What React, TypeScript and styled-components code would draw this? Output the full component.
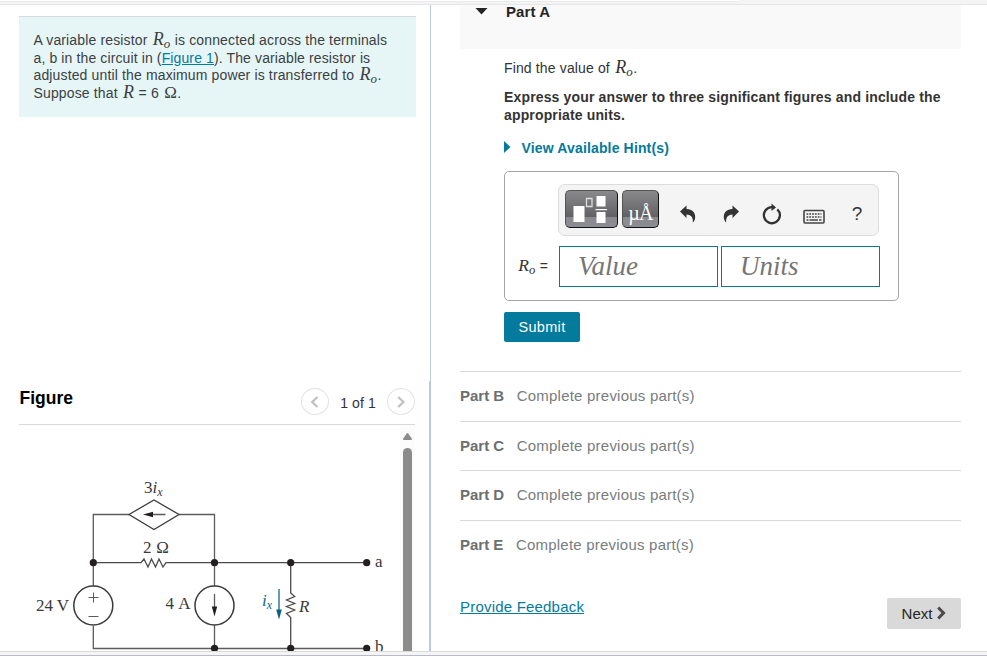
import React from "react";
import styled, { createGlobalStyle } from "styled-components";

const GlobalStyle = createGlobalStyle`
  * { box-sizing: border-box; }
  body {
    margin: 0;
    background: #fff;
    color: #333;
    font-family: "Liberation Sans", Arial, sans-serif;
    font-size: 14px;
    overflow: hidden;
  }
  button { font-family: inherit; margin: 0; }
`;

const Page = styled.div`
  display: flex;
  flex-direction: column;
  width: 987px;
  height: 656px;
`;

const TopEdge = styled.div`
  flex: none;
  height: 5px;
  background: #f4f4f4;
  border-bottom: 1px solid #e6e6e6;
`;

const TopEdgeTab = styled.div`
  width: 740px;
  height: 2px;
  background: #fff;
  border-bottom: 1px solid #ebebeb;
  border-bottom-right-radius: 4px;
`;

const BottomEdge = styled.div`
  flex: none;
  height: 5px;
  background: #f5f5f5;
  border-top: 1px solid #dadada;
  border-bottom: 1px solid #b9b9c9;
`;

const Columns = styled.main`
  display: flex;
  height: 646px;
`;

const LeftColumn = styled.section`
  flex: none;
  width: 431px;
`;

const ProblemPane = styled.div`
  height: 376px;
  padding: 11px 14px 0 19px;
  border-right: 1px solid #b9cbdd;
`;

const ProblemBox = styled.div`
  height: 101px;
  padding: 15px 0 0 14.5px;
  border-top: 1px solid #d5dcdc;
  background: #e6f6f7;
  color: #3c4043;
`;

const TextLine = styled.div<{ $spacing?: number; $height?: number }>`
  height: ${(p) => p.$height ?? 17.7}px;
  line-height: ${(p) => p.$height ?? 17.7}px;
  letter-spacing: ${(p) => p.$spacing ?? 0.14}px;
  white-space: nowrap;
`;

const MathText = styled.i<{ $upright?: boolean; $size?: number }>`
  padding: 0 0.5px 0 1.3px;
  font-family: "Liberation Serif", "Times New Roman", serif;
  font-style: ${(p) => (p.$upright ? "normal" : "italic")};
  font-size: ${(p) => p.$size ?? 18}px;
  line-height: 0;
  letter-spacing: 0;

  sub {
    font-size: 0.72em;
    line-height: 0;
    vertical-align: -3px;
  }
`;

const Link = styled.a<{ $size?: number; $spacing?: number }>`
  color: #047a9c;
  font-size: ${(p) => p.$size ?? 14}px;
  letter-spacing: ${(p) => p.$spacing ?? 0.12}px;
  text-decoration: underline;
`;

const FigurePane = styled.div`
  height: 270px;
  padding: 0 14px 0 19px;
  border-right: 2px solid #b9cbdd;
  width: 431px;
`;

const FigureHeader = styled.header`
  display: flex;
  align-items: center;
  width: 396px;
  height: 44px;
  border-bottom: 1px solid #dadada;
`;

const FigureTitle = styled.h2`
  flex: 1;
  margin: 0;
  padding: 0 0 9px 0.5px;
  color: #000;
  font-size: 17.5px;
  line-height: 22px;
`;

const PagerButton = styled.button`
  display: grid;
  place-items: center;
  width: 28px;
  height: 27px;
  margin-bottom: 2px;
  padding: 0;
  border: 1px solid #e2e2e2;
  border-radius: 50%;
  background: #fff;
`;

const PagerLabel = styled.span`
  width: 58px;
  text-align: center;
  font-size: 14px;
  letter-spacing: 0.1px;
`;

const FigureViewport = styled.div`
  display: flex;
  width: 396px;
  height: 226px;
  overflow: hidden;
`;

const Circuit = styled.svg`
  display: block;
  flex: none;
  width: 381px;
  height: 226px;
  font-family: "Liberation Serif", "Times New Roman", serif;
`;

const Scrollbar = styled.div`
  display: flex;
  flex-direction: column;
  align-items: center;
  width: 15px;
  padding-top: 8px;
  background: #fbfbfb;
`;

const ScrollThumb = styled.div`
  flex: 1;
  width: 9px;
  margin-top: 8px;
  border-radius: 5px 5px 0 0;
  background: #8b8b8b;
`;

const RightColumn = styled.section`
  flex: none;
  width: 501px;
  margin-left: 29px;
`;

const PartHeader = styled.header`
  display: flex;
  align-items: flex-start;
  height: 44px;
  padding-left: 15px;
  background: #f9f9f9;

  svg { margin-top: 3px; }
`;

const PartTitle = styled.h3`
  margin: -2px 0 0 18px;
  color: #252525;
  font-size: 15px;
  letter-spacing: 0.1px;
  line-height: 18px;
`;

const PartBody = styled.div`
  height: 322px;
  padding: 11px 0 0 44px;
`;

const Instruction = styled.div`
  margin-top: 10.3px;
  color: #333;
  font-weight: bold;
`;

const HintToggle = styled.div`
  display: flex;
  align-items: center;
  margin-top: 15px;
  color: #047a9c;
  font-weight: bold;
  gap: 10.5px;

  svg { margin-bottom: 2px; }
`;

const AnswerBox = styled.div`
  width: 395px;
  height: 130px;
  margin-top: 14px;
  padding: 12px 18px 0 13px;
  border: 1px solid #a6a6a6;
  border-radius: 5px;
`;

const Toolbar = styled.div`
  display: flex;
  align-items: flex-start;
  width: 321px;
  height: 52px;
  margin-left: 40px;
  padding: 5px 0 0 6px;
  border: 1px solid #dcdcdc;
  border-radius: 7px;
  background: #f4f4f4;
`;

const TemplateButton = styled.button<{ $width: number }>`
  width: ${(p) => p.$width}px;
  height: 38px;
  margin-right: 4px;
  padding: 0;
  border: 1px solid #111;
  border-top-color: #555;
  border-left-color: #555;
  border-radius: 5px;
  background: linear-gradient(#89898b, #626264 71%, #89898f 72%, #8c8c94);
  color: #fff;
  font: 20px "Liberation Serif", serif;

  svg { display: block; }
`;

const SymbolText = styled.span`
  display: block;
  padding-top: 8px;
  line-height: 24px;
  letter-spacing: -0.8px;
`;

const ToolIcons = styled.div`
  display: grid;
  grid-template-columns: 43px 43px 39px 46px 40px;
  justify-items: center;
  align-items: center;
  height: 24px;
  margin: 12px 0 0 3px;
`;

const KeyboardIcon = styled.svg`
  margin-top: 5px;
`;

const HelpMark = styled.span`
  font-size: 19px;
  line-height: 24px;
`;

const AnswerRow = styled.div`
  display: flex;
  align-items: center;
  margin-top: 10px;
`;

const AnswerLabel = styled.span`
  flex: none;
  width: 42px;
  margin-left: -1px;
  font-size: 14px;
  white-space: nowrap;
`;

const AnswerInput = styled.input`
  flex: none;
  width: 159px;
  height: 41px;
  padding: 1px 0 0 18px;
  border: 1px solid #047a9c;
  border-radius: 0;
  outline: 0;
  background: #fff;
  font: italic 27px "Liberation Serif", serif;

  & + & { margin-left: 3px; }
  &::placeholder { color: #757575; opacity: 1; }
`;

const SubmitButton = styled.button`
  width: 76px;
  height: 30px;
  margin-top: 11px;
  padding: 0;
  border: 0;
  border-radius: 2px;
  background: #047a9c;
  color: #fff;
  font-size: 14.5px;
  letter-spacing: 0.3px;
`;

const PartRow = styled.div`
  display: flex;
  height: 49.6px;
  border-top: 1px solid #dadada;
  color: #6a7070;
  font-size: 15px;
  line-height: 48.8px;
  white-space: nowrap;
  gap: 12.5px;
`;

const PartStatus = styled.span`
  color: #777d7d;
  letter-spacing: 0.22px;
`;

const FooterRow = styled.footer`
  display: flex;
  justify-content: space-between;
  align-items: flex-start;
  margin-top: 29px;
`;

const NextButton = styled.button`
  display: flex;
  align-items: center;
  justify-content: center;
  width: 74px;
  height: 31px;
  padding: 0 0 1px;
  border: 0;
  border-radius: 2px;
  background: #d9d9d9;
  color: #252525;
  font-size: 15px;
  gap: 5px;
`;

const Ro = ({ size }: { size?: number }) => (
  <MathText $size={size}>R<sub>o</sub></MathText>
);

const Chevron = ({ right = false }: { right?: boolean }) => (
  <svg width="10" height="14" viewBox="0 0 10 14" fill="none" stroke="#bfbfbf" strokeWidth="2.2">
    <path d={right ? "M2.200 2L7.500 7L2.200 12" : "M7.500 2L2.200 7L7.500 12"} />
  </svg>
);

const CircuitDiagram = () => (
  <Circuit viewBox="19 425 381 226">
    <g fill="none" stroke="#5c5a5b" strokeWidth="1.3">
      <path d="M93.3 586V514.5H129M179 514.5H214.5V586" />
      <path d="M93.3 562.7H141L144 559L148 567L151.500 559L155.500 567L159 559L163 567L166 562.7H367" stroke="#4c4a4b" />
      <path d="M93.3 626V648.5H367M214.5 625V648.5" />
      <path d="M290.7 562.7V593L294.700 596.500L286.5 600L294.700 603.500L286.5 606.500L294.700 610L286.5 613.500L290.7 617.500V648.5" stroke="#4c4a4b" />
      <path d="M129 514.5L154 500L179 514.5L154 529.5Z" stroke="#3d3b3c" />
      <circle cx="93.3" cy="605.5" r="19.5" stroke="#3d3b3c" strokeWidth="1.5" />
      <circle cx="214.5" cy="605.5" r="19.5" stroke="#3d3b3c" strokeWidth="1.5" />
      <path d="M88.5 597.5H98.5M93.5 592.5V602.5M88.5 616.5H98.5" strokeWidth="1" />
      <path d="M153 514.5H165.5M214.5 594V608" />
      <path d="M279 589V611" stroke="#14688c" />
    </g>
    <g fill="#231f20">
      <path d="M143 514.5L153 511.8V517.2ZM214.5 616.5L211.8 606.5H217.2Z" />
      <circle cx="93.3" cy="562.7" r="3.6" />
      <circle cx="214.5" cy="562.7" r="3.6" />
      <circle cx="290.7" cy="562.7" r="3.6" />
      <circle cx="366.7" cy="562.7" r="3.6" />
      <circle cx="214.5" cy="648.3" r="3.6" />
      <circle cx="290.7" cy="648.3" r="3.6" />
      <circle cx="366.7" cy="648.3" r="3.6" />
    </g>
    <path d="M279 619.5L276.2 609.5H281.8Z" fill="#0b5f85" />
    <g fill="#3a3839" fontSize="17">
      <text x="144" y="493">3<tspan fontStyle="italic">i</tspan><tspan fontStyle="italic" fontSize="12" dy="3">x</tspan></text>
      <text x="143" y="552.5" textLength="26">2 Ω</text>
      <text x="36" y="610.5" textLength="33">24 V</text>
      <text x="165.5" y="609" textLength="25">4 A</text>
      <text x="299" y="612" fontStyle="italic">R</text>
      <text x="375" y="567">a</text>
      <text x="375" y="652">b</text>
      <text x="262" y="606" fontStyle="italic" fill="#14688c">i<tspan fontSize="12" dy="3">x</tspan></text>
    </g>
  </Circuit>
);

const CurvedArrow = ({ redo = false }: { redo?: boolean }) => (
  <svg width="16" height="18" viewBox="0 0 16 18" fill="#333">
    <path
      transform={redo ? "matrix(-1 0 0 1 16 0)" : undefined}
      d="M0 6.500L6.500 .5V4C12.500 4.500 15.500 7.500 15.200 12.500C15 15 14 16.500 12.800 17.500C13.300 12.500 11.500 10 6.500 9.500V13Z"
    />
  </svg>
);

export default function App() {
  return (
    <>
      <GlobalStyle />
      <Page>
        <TopEdge><TopEdgeTab /></TopEdge>
        <Columns>
          <LeftColumn>
            <ProblemPane>
              <ProblemBox>
                <TextLine>A variable resistor <Ro /> is connected across the terminals</TextLine>
                <TextLine $spacing={0.12}>a, b in the circuit in (<Link href="#figure">Figure 1</Link>). The variable resistor is</TextLine>
                <TextLine>adjusted until the maximum power is transferred to <Ro />.</TextLine>
                <TextLine>Suppose that <MathText>R</MathText> = 6 <MathText $upright $size={17}>Ω</MathText>.</TextLine>
              </ProblemBox>
            </ProblemPane>
            <FigurePane id="figure">
              <FigureHeader>
                <FigureTitle>Figure</FigureTitle>
                <PagerButton aria-label="Previous figure"><Chevron /></PagerButton>
                <PagerLabel>1 of 1</PagerLabel>
                <PagerButton aria-label="Next figure"><Chevron right /></PagerButton>
              </FigureHeader>
              <FigureViewport>
                <CircuitDiagram />
                <Scrollbar>
                  <svg width="9" height="7" viewBox="0 0 9 7" fill="#8b8b8b"><path d="M3.800 .5Q4.500-.3 5.200 .5L8.800 5.500Q9.200 7 8 7H1Q-.2 7 .2 5.500Z" /></svg>
                  <ScrollThumb />
                </Scrollbar>
              </FigureViewport>
            </FigurePane>
          </LeftColumn>
          <RightColumn>
            <PartHeader>
              <svg width="13" height="7" viewBox="0 0 13 7" fill="#252525"><path d="M.5 0H12.500L6.500 6.500Z" /></svg>
              <PartTitle>Part A</PartTitle>
            </PartHeader>
            <PartBody>
              <TextLine>Find the value of <Ro />.</TextLine>
              <Instruction>
                <TextLine $spacing={0.15} $height={18}>Express your answer to three significant figures and include the</TextLine>
                <TextLine $spacing={0.15} $height={18}>appropriate units.</TextLine>
              </Instruction>
              <HintToggle>
                <svg width="7" height="12" viewBox="0 0 7 12" fill="#047a9c"><path d="M0 0L6.500 6L0 12Z" /></svg>
                <TextLine $spacing={0.15} $height={18}>View Available Hint(s)</TextLine>
              </HintToggle>
              <AnswerBox>
                <Toolbar>
                  <TemplateButton $width={53} aria-label="Templates">
                    <svg width="51" height="36" viewBox="0 0 51 36" fill="#fff">
                      <path d="M7.500 15H18.500V31H7.500ZM30.500 5H39.500V15.500H30.500ZM30.500 21H39.500V32H30.500ZM29.500 18H41V19.200H29.500Z" />
                      <path d="M20.500 7.500H26V15.500H20.500Z" fill="none" stroke="#ddd" strokeWidth="1.300" />
                    </svg>
                  </TemplateButton>
                  <TemplateButton $width={37} aria-label="Symbols"><SymbolText>µÅ</SymbolText></TemplateButton>
                  <ToolIcons>
                    <CurvedArrow />
                    <CurvedArrow redo />
                    <svg width="20" height="22" viewBox="0 0 20 22">
                      <path d="M15.300 6.300A8 8 0 1 1 10 4.200" fill="none" stroke="#333" strokeWidth="2.300" />
                      <path d="M9.500 .5L14 4.500L9.500 8Z" fill="#333" />
                    </svg>
                    <KeyboardIcon width="22" height="15" viewBox="0 0 22 15" fill="none" stroke="#444">
                      <rect x="1" y="1.5" width="20" height="12.5" rx="1" strokeWidth="1.6" />
                      <path d="M3.500 5H18.500M3.500 8H18.500" strokeWidth="1.700" strokeDasharray="1.800 1" />
                      <path d="M3.500 11H5.500M6.500 11H15M16 11H18.500" strokeWidth="1.500" />
                    </KeyboardIcon>
                    <HelpMark>?</HelpMark>
                  </ToolIcons>
                </Toolbar>
                <AnswerRow>
                  <AnswerLabel><Ro size={17.5} /> =</AnswerLabel>
                  <AnswerInput aria-label="Value" placeholder="Value" />
                  <AnswerInput aria-label="Units" placeholder="Units" />
                </AnswerRow>
              </AnswerBox>
              <SubmitButton>Submit</SubmitButton>
            </PartBody>
            {["B", "C", "D", "E"].map((part) => (
              <PartRow key={part}>
                <b>Part {part}</b>
                <PartStatus>Complete previous part(s)</PartStatus>
              </PartRow>
            ))}
            <FooterRow>
              <Link href="#feedback" $size={15} $spacing={0.2}>Provide Feedback</Link>
              <NextButton>
                Next
                <svg width="9" height="14" viewBox="0 0 9 14" fill="none" stroke="#4a4a4a" strokeWidth="3"><path d="M1.200 1.500L6.500 7L1.200 12.500" /></svg>
              </NextButton>
            </FooterRow>
          </RightColumn>
        </Columns>
        <BottomEdge />
      </Page>
    </>
  );
}
